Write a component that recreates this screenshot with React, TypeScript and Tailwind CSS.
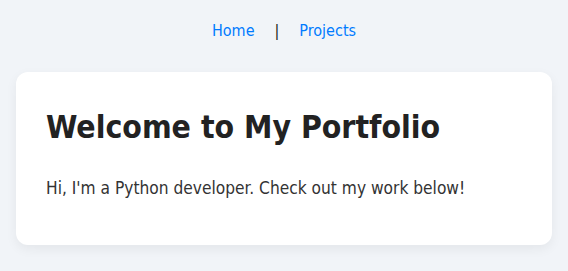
export default function App() {
  return (
    <div className="min-h-[271px] bg-[#f1f4f8] px-4 pt-[21px] pb-6" style={{ fontFamily: '"DejaVu Sans Condensed", "DejaVu Sans", sans-serif' }}>
      <nav className="flex justify-center items-center h-5 text-[16px] leading-5">
        <a href="#" className="text-[#007bff]">Home</a>
        <span className="mx-[20px] text-[#222]">|</span>
        <a href="#" className="text-[#007bff]">Projects</a>
      </nav>
      <div className="mt-[31px] rounded-[12px] bg-white px-[30px] pt-[36px] pb-[46px] shadow-[0_4px_12px_rgba(0,0,0,0.06)]">
        <h1 className="text-[31.7px] font-bold leading-[38px] text-[#222]">Welcome to My Portfolio</h1>
        <p className="mt-[32px] text-[17.2px] leading-[21px] text-[#333]">Hi, I'm a Python developer. Check out my work below!</p>
      </div>
    </div>
  );
}
